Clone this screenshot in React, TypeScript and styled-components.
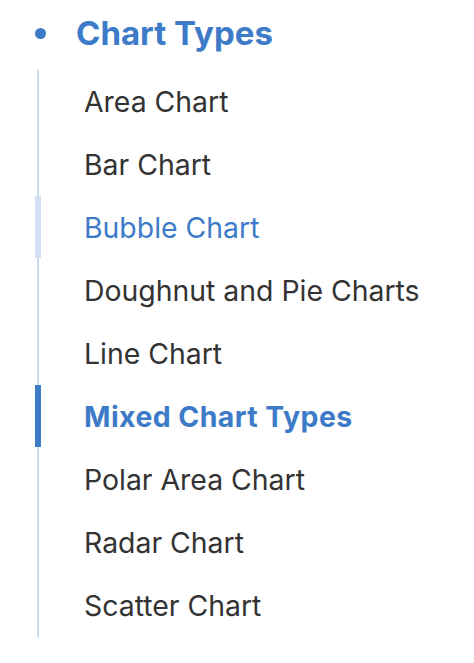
import * as React from 'react';
import styled, { createGlobalStyle } from 'styled-components';

const GlobalStyle = createGlobalStyle`
  body {
    margin: 0;
    background: #ffffff;
    font-family: Inter, "Noto Sans", sans-serif;
  }
`;

const Nav = styled.nav`
  padding: 10px 0 0 0;
`;

const Heading = styled.div`
  display: flex;
  align-items: center;
  height: 46px;
  padding-left: 35px;
`;

const Bullet = styled.span`
  width: 11px;
  height: 11px;
  border-radius: 50%;
  background: #3d7bc8;
  margin-right: 30px;
`;

const Title = styled.h2`
  margin: 0;
  font-size: 33px;
  font-weight: 700;
  color: #3d7bc8;
`;

const List = styled.ul`
  list-style: none;
  margin: 14px 0 0 37px;
  padding: 0;
  border-left: 2px solid #cbdcf1;
`;

type ItemProps = { $state?: 'active' | 'hover' };

const Item = styled.li<ItemProps>`
  position: relative;
  height: 63px;
  display: flex;
  align-items: center;
  padding-left: 45px;
  font-size: 28.4px;
  font-weight: ${({ $state }) => ($state === 'active' ? 650 : 400)};
  letter-spacing: ${({ $state }) => ($state === 'active' ? '0.45px' : '0')};
  color: ${({ $state }) => ($state ? '#3d7bc8' : '#333333')};

  &::before {
    content: '';
    display: ${({ $state }) => ($state ? 'block' : 'none')};
    position: absolute;
    left: -4px;
    top: 0;
    width: 6px;
    height: 62px;
    background: ${({ $state }) => ($state === 'active' ? '#3d7bc8' : '#d1e0f2')};
  }
`;

const items: { label: string; state?: 'active' | 'hover' }[] = [
  { label: 'Area Chart' },
  { label: 'Bar Chart' },
  { label: 'Bubble Chart', state: 'hover' },
  { label: 'Doughnut and Pie Charts' },
  { label: 'Line Chart' },
  { label: 'Mixed Chart Types', state: 'active' },
  { label: 'Polar Area Chart' },
  { label: 'Radar Chart' },
  { label: 'Scatter Chart' },
];

const App: React.FunctionComponent = () => (
  <>
    <GlobalStyle />
    <Nav>
      <Heading>
        <Bullet />
        <Title>Chart Types</Title>
      </Heading>
      <List>
        {items.map(item => (
          <Item key={item.label} $state={item.state}>
            {item.label}
          </Item>
        ))}
      </List>
    </Nav>
  </>
);

export default App;
